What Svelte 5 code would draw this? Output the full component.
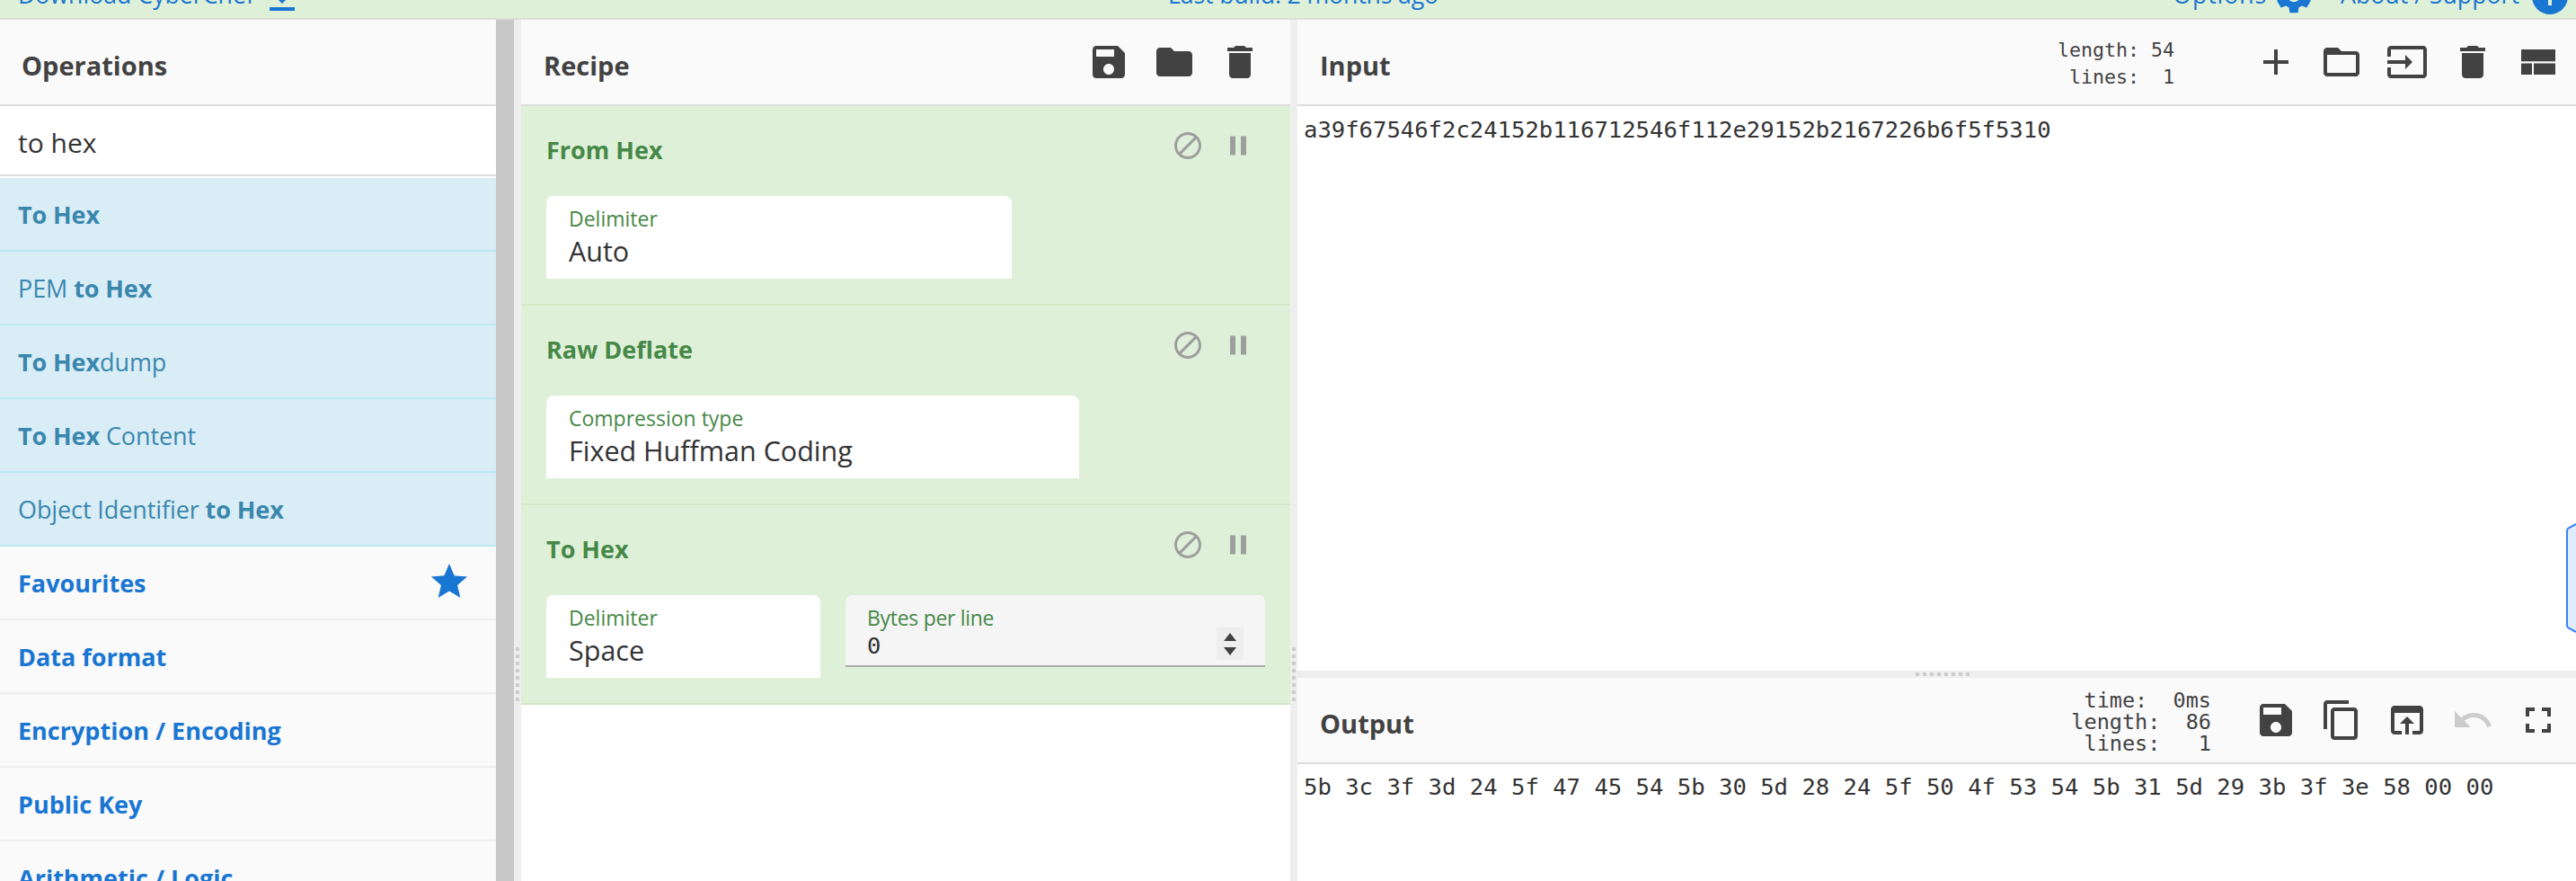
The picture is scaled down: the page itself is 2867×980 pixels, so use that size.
<script>
  const P = {
    save: "M17 3H5c-1.11 0-2 .9-2 2v14c0 1.1.89 2 2 2h14c1.1 0 2-.9 2-2V7l-4-4zm-5 16c-1.66 0-3-1.34-3-3s1.34-3 3-3 3 1.34 3 3-1.34 3-3 3zm3-10H5V5h10v4z",
    folder: "M10 4H4c-1.1 0-1.99.9-1.99 2L2 18c0 1.1.9 2 2 2h16c1.1 0 2-.9 2-2V8c0-1.1-.9-2-2-2h-8l-2-2z",
    folderOpen: "M20 6h-8l-2-2H4c-1.1 0-1.99.9-1.99 2L2 18c0 1.1.9 2 2 2h16c1.1 0 2-.9 2-2V8c0-1.1-.9-2-2-2zm0 12H4V8h16v10z",
    del: "M6 19c0 1.1.9 2 2 2h8c1.1 0 2-.9 2-2V7H6v12zM19 4h-3.5l-1-1h-5l-1 1H5v2h14V4z",
    add: "M19 13h-6v6h-2v-6H5v-2h6V5h2v6h6v2z",
    input: "M21 3.01H3c-1.1 0-2 .9-2 2V9h2V4.99h18v14.03H3V15H1v4.01c0 1.1.9 1.98 2 1.98h18c1.1 0 2-.88 2-1.98v-14c0-1.11-.9-2-2-2zM11 16l4-4-4-4v3H1v2h10v3z",
    layout: "M2.5 5h19v6.6h-19zM2.5 12.7h6V19h-6zM9.5 12.7h12V19h-12z",
    copy: "M16 1H4c-1.1 0-2 .9-2 2v14h2V3h12V1zm3 4H8c-1.1 0-2 .9-2 2v14c0 1.1.9 2 2 2h11c1.1 0 2-.9 2-2V7c0-1.1-.9-2-2-2zm0 16H8V7h11v14z",
    open: "M19 4H5c-1.11 0-2 .9-2 2v12c0 1.1.89 2 2 2h4v-2H5V8h14v10h-4v2h4c1.1 0 2-.9 2-2V6c0-1.1-.89-2-2-2zm-7 6l-4 4h3v6h2v-6h3l-4-4z",
    undo: "M12.5 8c-2.65 0-5.05.99-6.9 2.6L2 7v9h9l-3.62-3.62c1.39-1.16 3.16-1.88 5.12-1.88 3.54 0 6.55 2.31 7.6 5.5l2.37-.78C21.08 11.03 17.15 8 12.5 8z",
    full: "M7 14H5v5h5v-2H7v-3zm-2-4h2V7h3V5H5v5zm12 7h-3v2h5v-5h-2v3zM14 5v2h3v3h2V5h-5z",
    block: "M12 2C6.48 2 2 6.48 2 12s4.48 10 10 10 10-4.48 10-10S17.52 2 12 2zM4 12c0-4.42 3.58-8 8-8 1.85 0 3.55.63 4.9 1.69L5.69 16.9C4.63 15.55 4 13.85 4 12zm8 8c-1.85 0-3.55-.63-4.9-1.69L18.31 7.1C19.37 8.45 20 10.15 20 12c0 4.42-3.58 8-8 8z",
    pause: "M6 19h4V5H6v14zm8-14v14h4V5h-4z",
    star: "M12 17.27L18.18 21l-1.64-7.03L22 9.24l-7.19-.61L12 2 9.19 8.63 2 9.24l5.46 4.73L5.82 21z",
    gear: "M19.14 12.94c.04-.3.06-.61.06-.94 0-.32-.02-.64-.07-.94l2.03-1.58c.18-.14.23-.41.12-.61l-1.92-3.32c-.12-.22-.37-.29-.59-.22l-2.39.96c-.5-.38-1.03-.7-1.62-.94l-.36-2.54c-.04-.24-.24-.41-.48-.41h-3.84c-.24 0-.43.17-.47.41l-.36 2.54c-.59.24-1.13.57-1.62.94l-2.39-.96c-.22-.08-.47 0-.59.22L2.74 8.87c-.12.21-.08.47.12.61l2.03 1.58c-.05.3-.09.63-.09.94s.02.64.07.94l-2.03 1.58c-.18.14-.23.41-.12.61l1.92 3.32c.12.22.37.29.59.22l2.39-.96c.5.38 1.03.7 1.62.94l.36 2.54c.05.24.24.41.48.41h3.84c.24 0 .44-.17.47-.41l.36-2.54c.59-.24 1.13-.56 1.62-.94l2.39.96c.22.08.47 0 .59-.22l1.92-3.32c.12-.22.07-.47-.12-.61l-2.01-1.58zM12 15.6c-1.98 0-3.6-1.62-3.6-3.6s1.62-3.6 3.6-3.6 3.6 1.62 3.6 3.6-1.62 3.6-3.6 3.6z",
    info: "M12 2C6.48 2 2 6.48 2 12s4.48 10 10 10 10-4.48 10-10S17.52 2 12 2zm1 15h-2v-6h2v6zm0-8h-2V7h2v2z",
    download: "M19 9h-4V3H9v6H5l7 7 7-7zM5 18v2h14v-2H5z"
  };
  const results = [
    [["To Hex", 1]],
    [["PEM ", 0], ["to Hex", 1]],
    [["To Hex", 1], ["dump", 0]],
    [["To Hex", 1], [" Content", 0]],
    [["Object Identifier ", 0], ["to Hex", 1]]
  ];
  const cats = ["Data format", "Encryption / Encoding", "Public Key", "Arithmetic / Logic"];
  const inputIcons = ["add", "folderOpen", "input", "del", "layout"];
  const outputIcons = ["save", "copy", "open", "undo", "full"];
</script>

<div class="page">
  <header class="banner">
    <div class="ban-left"><span>Download CyberChef</span><svg class="i48 dl" viewBox="0 0 24 24"><path d={P.download} /></svg></div>
    <div class="ban-mid">Last build: 2 months ago</div>
    <div class="ban-right">
      <span class="opts">Options</span><svg class="i48 gear" viewBox="0 0 24 24"><path d={P.gear} /></svg>
      <span class="about">About / Support</span><svg class="i48 inf" viewBox="0 0 24 24"><path d={P.info} /></svg>
    </div>
  </header>

  <main class="main">
    <section class="ops">
      <div class="head"><h2 class="title">Operations</h2></div>
      <div class="search">to hex</div>
      <ul class="res">
        {#each results as r}
          <li class="row hit">{#each r as [t, b]}<span class:b={b}>{t}</span>{/each}</li>
        {/each}
      </ul>
      <ul class="cats">
        <li class="row cat fav">Favourites<svg class="i48 star" viewBox="0 0 24 24"><path d={P.star} /></svg></li>
        {#each cats as c}<li class="row cat">{c}</li>{/each}
      </ul>
    </section>
    <div class="scrollbar"></div>
    <div class="gutter"><div class="dots"></div></div>

    <section class="recipe">
      <div class="head">
        <h2 class="title">Recipe</h2>
        <div class="icons">
          <svg class="i48" viewBox="0 0 24 24"><path d={P.save} /></svg>
          <svg class="i48" viewBox="0 0 24 24"><path d={P.folder} /></svg>
          <svg class="i48" viewBox="0 0 24 24"><path d={P.del} /></svg>
        </div>
      </div>

      <article class="op">
        <div class="op-head"><h3>From Hex</h3><div class="op-icons"><svg viewBox="0 0 24 24"><path d={P.block} /></svg><svg viewBox="0 0 24 24"><path d={P.pause} /></svg></div></div>
        <div class="fields"><div class="field w518"><label>Delimiter</label><div class="val">Auto</div></div></div>
      </article>
      <article class="op">
        <div class="op-head"><h3>Raw Deflate</h3><div class="op-icons"><svg viewBox="0 0 24 24"><path d={P.block} /></svg><svg viewBox="0 0 24 24"><path d={P.pause} /></svg></div></div>
        <div class="fields"><div class="field w593"><label>Compression type</label><div class="val">Fixed Huffman Coding</div></div></div>
      </article>
      <article class="op">
        <div class="op-head"><h3>To Hex</h3><div class="op-icons"><svg viewBox="0 0 24 24"><path d={P.block} /></svg><svg viewBox="0 0 24 24"><path d={P.pause} /></svg></div></div>
        <div class="fields">
          <div class="field w305"><label>Delimiter</label><div class="val">Space</div></div>
          <div class="field num">
            <label>Bytes per line</label>
            <div class="numval">0</div>
            <div class="spin"><i class="up"></i><i class="down"></i></div>
          </div>
        </div>
      </article>
    </section>
    <div class="gutter"><div class="dots"></div></div>

    <section class="io">
      <div class="in">
        <div class="head">
          <h2 class="title">Input</h2>
          <pre class="stats in-stats">length: 54
lines:  1</pre>
          <div class="icons">
            {#each inputIcons as n}<svg class="i48" viewBox="0 0 24 24"><path d={P[n]} /></svg>{/each}
          </div>
        </div>
        <div class="text">a39f67546f2c24152b116712546f112e29152b2167226b6f5f5310</div>
      </div>
      <div class="hgutter"><div class="hdots"></div></div>
      <div class="out">
        <div class="head">
          <h2 class="title">Output</h2>
          <pre class="stats out-stats">time:  0ms
length:  86
lines:   1</pre>
          <div class="icons">
            {#each outputIcons as n}<svg class="i48" class:dim={n === "undo"} viewBox="0 0 24 24"><path d={P[n]} /></svg>{/each}
          </div>
        </div>
        <div class="text">5b 3c 3f 3d 24 5f 47 45 54 5b 30 5d 28 24 5f 50 4f 53 54 5b 31 5d 29 3b 3f 3e 58 00 00</div>
      </div>
    </section>
  </main>
  <svg class="bubble" viewBox="0 0 11 122"><path d="M11 1 L2.5 5.5 Q1 6.5 1 8.5 V113.5 Q1 115.5 2.5 116.5 L11 121" fill="#e1ebff" stroke="#3b82f6" stroke-width="2" /></svg>
</div>

<style>
  :global(body) { margin: 0; background: #fff; }
  :global(html), :global(body) { overflow: hidden; }
  .page {
    position: relative;
    width: 2867px;
    height: 980px;
    overflow: hidden;
    font-family: "Open Sans", "Noto Sans", sans-serif;
    color: #424242;
  }
  ul { list-style: none; margin: 0; padding: 0; }
  h2, h3 { margin: 0; }
  pre { margin: 0; }
  .banner {
    height: 20px;
    border-bottom: 2px solid #ddd;
    background: #dff0d8;
    overflow: hidden;
    display: grid;
    grid-template-columns: 1fr 1fr 1fr;
    align-items: start;
    color: #1976d2;
    font-size: 26.7px;
    line-height: 36px;
    padding: 0 0 0 20px;
  }
  .banner > div { display: flex; align-items: flex-start; margin-top: -24px; height: 36px; white-space: nowrap; }
  .ban-mid { justify-self: start; margin-left: 331px; letter-spacing: -0.15px; }
  .ban-right { justify-self: end; padding-right: 5px; }
  .opts { letter-spacing: 0.9px; }
  .about { margin-left: 28px; }
  .banner svg { fill: #1976d2; }
  .dl { margin: -4px 0 0 7px; }
  .gear { margin: -5px 0 0 6px; }
  .inf { margin: -4px 0 0 10px; }

  .main { display: flex; height: 958px; }
  .ops { width: 552px; flex: none; background: #fafafa; }
  .scrollbar { width: 20px; flex: none; background: #c8c8c8; }
  .gutter { width: 8px; flex: none; background: #eee; display: flex; justify-content: center; }
  .dots {
    margin-top: 698px;
    width: 4px;
    height: 60px;
    background: repeating-linear-gradient(to bottom, #ccc 0 4px, transparent 4px 8px);
  }
  .recipe { width: 856px; flex: none; background: #fff; }
  .io { flex: 1; min-width: 0; display: flex; flex-direction: column; background: #fff; }

  .head {
    height: 94px;
    background: #fafafa;
    border-bottom: 2px solid #ddd;
    display: flex;
    align-items: flex-start;
    padding: 0 0 0 25px;
  }
  .title {
    margin-top: 23px;
    font-size: 29px;
    line-height: 56px;
    font-weight: 700;
    color: #424242;
  }
  .ops .title { margin-left: -1px; }
  .icons { margin: 23px 32px 0 auto; display: flex; gap: 25px; }
  .i48 { width: 48px; height: 48px; fill: #424242; flex: none; display: block; }
  .i48.dim { fill: #ccc; }

  .search {
    height: 76px;
    line-height: 82px;
    background: #fff;
    border-bottom: 2px solid #ddd;
    padding-left: 20px;
    font-size: 30px;
    color: #333;
    margin-bottom: 2px;
    box-shadow: 0 2px 0 #fff;
  }
  .row {
    height: 80px;
    line-height: 81px;
    border-bottom: 2px solid #eee;
    padding-left: 20px;
    font-size: 27px;
    white-space: nowrap;
    position: relative;
  }
  .hit { background: #d9edf7; color: #3a87ad; border-bottom-color: #bce8f1; letter-spacing: -0.1px; }
  .b { font-weight: 700; }
  .cat { color: #1976d2; font-weight: 700; background: #fafafa; }
  .fav { display: flex; justify-content: space-between; }
  .cat .star { fill: #1976d2; margin: 15px 28px 0 0; }

  .op {
    height: 220px;
    background: #dff0d8;
    border-bottom: 2px solid #d3e8c8;
    padding: 0 28px;
  }
  .op-head { display: flex; height: 100px; align-items: flex-start; }
  .op-head h3 {
    margin: 26px 0 0 0;
    font-size: 27px;
    line-height: 46px;
    font-weight: 700;
    color: #468847;
  }
  .op-icons { margin: 26px 12px 0 auto; display: flex; gap: 20px; }
  .op-icons svg { width: 36px; height: 36px; fill: #9e9e9e; display: block; }
  .fields { display: flex; gap: 28px; }
  .field {
    height: 92px;
    background: #fff;
    border-radius: 8px 8px 0 0;
    padding-left: 25px;
    box-sizing: border-box;
    position: relative;
    flex: none;
  }
  .w518 { width: 518px; }
  .w593 { width: 593px; }
  .w305 { width: 305px; }
  .field label {
    display: block;
    padding-top: 10px;
    font-size: 23px;
    line-height: 30px;
    color: #468847;
  }
  .num label { letter-spacing: -0.3px; }
  .val { font-size: 30.5px; line-height: 40px; margin-top: 1px; color: #333; }
  .num {
    width: 467px;
    height: 80px;
    background: #f5f5f5;
    border-bottom: 2px solid #aaa;
    padding-left: 24px;
  }
  .numval { font: 25.58px/32px "DejaVu Sans Mono", monospace; color: #333; margin-top: 0; }
  .spin {
    position: absolute;
    right: 24px;
    top: 36px;
    width: 30px;
    height: 36px;
    background: #eee;
  }
  .spin i {
    position: absolute;
    left: 8px;
    width: 0;
    height: 0;
    border-left: 7px solid transparent;
    border-right: 7px solid transparent;
  }
  .up { top: 6px; border-bottom: 9px solid #424242; }
  .down { top: 22px; border-top: 9px solid #424242; }

  .in { height: 724px; flex: none; }
  .stats { font-family: "DejaVu Sans Mono", monospace; text-align: right; color: #424242; }
  .in-stats { margin: 19px 89px 0 auto; font-size: 21.6px; line-height: 30px; }
  .out-stats { margin: 13px 48px 0 auto; font-size: 23.5px; line-height: 24px; }
  .stats + .icons { margin: 23px 18px 0 0; }
  .text {
    padding: 11px 7px;
    font: 25.58px/30px "DejaVu Sans Mono", monospace;
    color: #333;
    white-space: nowrap;
  }
  .out .text { padding-top: 10px; }
  .hgutter { height: 8px; flex: none; background: #eee; position: relative; }
  .hdots {
    position: absolute;
    left: 688px;
    top: 2px;
    width: 60px;
    height: 4px;
    background: repeating-linear-gradient(to right, #ccc 0 4px, transparent 4px 8px);
  }
  .bubble { position: absolute; right: 0; top: 582px; width: 11px; height: 122px; }
</style>
